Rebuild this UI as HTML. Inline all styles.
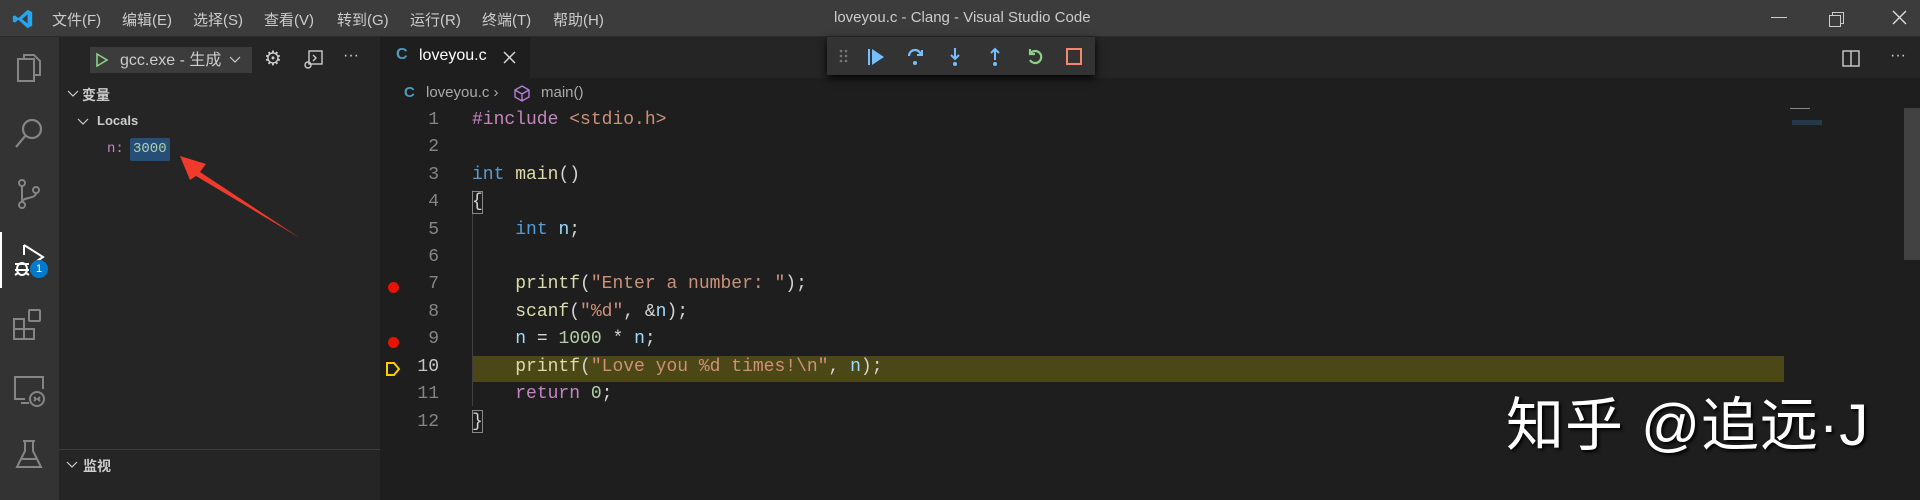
<!DOCTYPE html>
<html><head><meta charset="utf-8"><style>
*{margin:0;padding:0;box-sizing:border-box}
body{width:1920px;height:500px;background:#1e1e1e;overflow:hidden;position:relative;font-family:"Liberation Sans","Noto Sans CJK SC",sans-serif;color:#ccc}
.abs{position:absolute}
#title{left:0;top:0;width:1920px;height:37px;background:#3c3c3c;border-bottom:1px solid #2b2b2b}
#title span.m{position:absolute;top:9px;font-size:15px;color:#ccc}
#act{left:0;top:37px;width:59px;height:463px;background:#333}
#side{left:59px;top:37px;width:321px;height:463px;background:#252526}
#tabs{left:380px;top:37px;width:1540px;height:41px;background:#252526}
.mono{font-family:"Liberation Mono",monospace;font-size:18px}
.ln{position:absolute;left:400px;width:39px;text-align:right;color:#858585;font-family:"Liberation Mono",monospace;font-size:18px}
.cd{position:absolute;left:472px;white-space:pre;font-family:"Liberation Mono",monospace;font-size:18px;color:#d4d4d4}
.f{color:#dcdcaa}.s{color:#ce9178}.v{color:#9cdcfe}.k{color:#569cd6}.c{color:#c586c0}.nu{color:#b5cea8}
</style></head><body>
<div id="title" class="abs">
<svg class="abs" style="left:12px;top:8px" width="22" height="22" viewBox="0 0 24 24"><path d="M17 2 L22 4.5 V19.5 L17 22 L7 13 L3 16 L1 15 V9 L3 8 L7 11 Z M17 7 L11 12 L17 17Z" fill="#23a7f2" fill-rule="evenodd"/></svg>
<span class="m" style="left:52px">文件(F)</span><span class="m" style="left:122px">编辑(E)</span><span class="m" style="left:193px">选择(S)</span><span class="m" style="left:264px">查看(V)</span><span class="m" style="left:337px">转到(G)</span><span class="m" style="left:410px">运行(R)</span><span class="m" style="left:482px">终端(T)</span><span class="m" style="left:553px">帮助(H)</span>
<span class="m" style="left:834px">loveyou.c - Clang - Visual Studio Code</span>
<div class="abs" style="left:1771px;top:17px;width:16px;height:1px;background:#ccc"></div>
<div class="abs" style="left:1832px;top:12px;width:12px;height:12px;border:1px solid #ccc"></div>
<div class="abs" style="left:1829px;top:15px;width:12px;height:12px;border:1px solid #ccc;background:#3c3c3c"></div>
<svg class="abs" style="left:1892px;top:10px" width="15" height="15"><path d="M1 1L14 14M14 1L1 14" stroke="#ddd" stroke-width="1.4"/></svg>
</div>
<div id="act" class="abs">
<svg class="abs" style="left:13px;top:14px" width="32" height="32" viewBox="0 0 32 32" fill="none" stroke="#858585" stroke-width="2"><path d="M11 8V4h10l6 6v14h-6"/><rect x="5" y="8" width="16" height="22"/></svg>
<svg class="abs" style="left:13px;top:80px" width="32" height="32" viewBox="0 0 32 32" fill="none" stroke="#858585" stroke-width="2.2"><circle cx="19" cy="12" r="9"/><path d="M13 18L3 30"/></svg>
<svg class="abs" style="left:14px;top:141px" width="30" height="32" viewBox="0 0 30 32" fill="none" stroke="#858585" stroke-width="2"><circle cx="8" cy="5" r="3"/><circle cx="8" cy="27" r="3"/><circle cx="22" cy="12" r="3"/><path d="M8 8v16M22 15c0 6-14 4-14 9"/></svg>
<div class="abs" style="left:0;top:195px;width:2px;height:56px;background:#fff"></div>
<svg class="abs" style="left:12px;top:205px" width="36" height="36" viewBox="0 0 36 36" fill="none" stroke="#fff" stroke-width="2"><path d="M12 3v10M12 3l19 12-6 4"/><ellipse cx="10" cy="27" rx="5" ry="6"/><path d="M3 22h14M3 28h14M3 33l3-2M17 33l-3-2"/></svg>
<div class="abs" style="left:30px;top:223px;width:18px;height:18px;border-radius:9px;background:#007acc;color:#fff;font-size:11px;text-align:center;line-height:18px">1</div>
<svg class="abs" style="left:13px;top:272px" width="32" height="32" viewBox="0 0 32 32" fill="none" stroke="#858585" stroke-width="2"><rect x="1" y="10" width="10" height="10"/><rect x="1" y="20" width="10" height="10"/><rect x="11" y="20" width="10" height="10"/><rect x="16" y="1" width="11" height="11" rx="1"/></svg>
<svg class="abs" style="left:13px;top:338px" width="32" height="32" viewBox="0 0 32 32" fill="none" stroke="#858585" stroke-width="2"><path d="M12 24H2V2h28v12M8 28h8"/><circle cx="24" cy="24" r="7"/><path d="M21 22l2 2-2 2M27 22l-2 2 2 2"/></svg>
<svg class="abs" style="left:15px;top:402px" width="28" height="32" viewBox="0 0 28 32" fill="none" stroke="#858585" stroke-width="2"><path d="M8 2h12M10 2v10L2 28h24L18 12V2M6 20h16"/></svg>
</div>
<div id="side" class="abs">
<div class="abs" style="left:31px;top:10px;width:162px;height:26px;background:#3c3c3c"></div>
<svg class="abs" style="left:36px;top:15px" width="14" height="16"><path d="M2 2L12 8L2 14Z" fill="none" stroke="#89d185" stroke-width="1.6"/></svg>
<span class="abs" style="left:61px;top:9px;font-size:16px;color:#ccc">gcc.exe - 生成</span>
<svg class="abs" style="left:170px;top:18px" width="12" height="10"><path d="M1 2l5 5 5-5" fill="none" stroke="#ccc" stroke-width="1.2"/></svg>
<span class="abs" style="left:205px;top:9px;font-size:20px;color:#ccc">⚙</span>
<svg class="abs" style="left:243px;top:12px" width="22" height="22" viewBox="0 0 22 22" fill="none" stroke="#ccc" stroke-width="1.4"><rect x="7" y="2" width="13" height="13"/><path d="M11 6l3 3-3 3"/><circle cx="6" cy="16" r="3"/></svg>
<span class="abs" style="left:284px;top:10px;font-size:16px;color:#ccc">···</span>
<svg class="abs" style="left:8px;top:52px" width="12" height="10"><path d="M1 2l5 5 5-5" fill="none" stroke="#ccc" stroke-width="1.2"/></svg>
<span class="abs" style="left:23px;top:48px;font-size:14px;color:#ccc;font-weight:bold">变量</span>
<svg class="abs" style="left:18px;top:80px" width="12" height="10"><path d="M1 2l5 5 5-5" fill="none" stroke="#ccc" stroke-width="1.2"/></svg>
<span class="abs" style="left:38px;top:76px;font-size:13px;color:#ccc;font-weight:bold">Locals</span>
<span class="abs mono" style="left:48px;top:104px;font-size:14px;color:#c586c0">n:</span>
<div class="abs" style="left:71px;top:101px;width:40px;height:23px;background:#264f78;border-radius:2px"></div>
<span class="abs mono" style="left:74px;top:104px;font-size:14px;color:#b5cea8">3000</span>
<div class="abs" style="left:0;top:412px;width:321px;height:1px;background:#3c3c3c"></div>
<svg class="abs" style="left:7px;top:423px" width="12" height="10"><path d="M1 2l5 5 5-5" fill="none" stroke="#ccc" stroke-width="1.2"/></svg>
<span class="abs" style="left:24px;top:419px;font-size:14px;color:#ccc;font-weight:bold">监视</span>
</div>
<svg class="abs" style="left:170px;top:150px" width="140" height="95"><path d="M130 88L30 22L36 14L10 6L20 30L26 26Z" fill="#f03a2c"/></svg>
<div id="tabs" class="abs">
<div class="abs" style="left:0;top:0;width:150px;height:41px;background:#1e1e1e"></div>
<span class="abs" style="left:16px;top:9px;font-size:16px;color:#519aba;font-weight:bold">C</span>
<span class="abs" style="left:39px;top:10px;font-size:16px;color:#fff">loveyou.c</span>
<svg class="abs" style="left:123px;top:14px" width="13" height="13"><path d="M1 1l11 11M12 1L1 12" stroke="#ddd" stroke-width="1.4"/></svg>
<svg class="abs" style="left:1462px;top:13px" width="18" height="17"><rect x="1" y="1" width="16" height="15" fill="none" stroke="#ccc" stroke-width="1.4"/><path d="M9 1v15" stroke="#ccc" stroke-width="1.4"/></svg>
<span class="abs" style="left:1510px;top:10px;font-size:16px;color:#ccc">···</span>
</div>
<span class="abs" style="left:404px;top:84px;font-size:15px;color:#519aba;font-weight:bold">C</span>
<span class="abs" style="left:426px;top:84px;font-size:15px;color:#aaa">loveyou.c ›</span>
<svg class="abs" style="left:514px;top:85px" width="16" height="17" viewBox="0 0 16 17" fill="none" stroke="#b180d7" stroke-width="1.4"><path d="M8 1l7 4v7l-7 4-7-4V5zM1 5l7 4 7-4M8 9v7"/></svg>
<span class="abs" style="left:541px;top:84px;font-size:15px;color:#aaa">main()</span>
<div class="abs" style="left:827px;top:37px;width:268px;height:38px;background:#333;box-shadow:0 3px 8px #000"></div>
<svg class="abs" style="left:838px;top:48px" width="12" height="16" fill="#777"><circle cx="3" cy="3" r="1.3"/><circle cx="8" cy="3" r="1.3"/><circle cx="3" cy="8" r="1.3"/><circle cx="8" cy="8" r="1.3"/><circle cx="3" cy="13" r="1.3"/><circle cx="8" cy="13" r="1.3"/></svg>
<svg class="abs" style="left:866px;top:47px" width="20" height="20"><rect x="2" y="2" width="2" height="16" fill="#75beff"/><path d="M6 2l12 8-12 8z" fill="#75beff"/></svg>
<svg class="abs" style="left:905px;top:46px" width="20" height="22" fill="none" stroke="#75beff" stroke-width="2.2"><path d="M4 10a6 6 0 0 1 12 0"/><path d="M12 9h5V4" stroke-width="2"/><circle cx="10" cy="17" r="2" fill="#75beff" stroke="none"/></svg>
<svg class="abs" style="left:945px;top:46px" width="20" height="22" fill="none" stroke="#75beff" stroke-width="2"><path d="M10 2v11M6 9l4 4 4-4"/><circle cx="10" cy="18" r="2" fill="#75beff" stroke="none"/></svg>
<svg class="abs" style="left:985px;top:46px" width="20" height="22" fill="none" stroke="#75beff" stroke-width="2"><path d="M10 14V3M6 7l4-4 4 4"/><circle cx="10" cy="18" r="2" fill="#75beff" stroke="none"/></svg>
<svg class="abs" style="left:1025px;top:46px" width="20" height="22" fill="none" stroke="#89d185" stroke-width="2.2"><path d="M5 8a6 6 0 1 1 0 6M5 3v5h5"/></svg>
<div class="abs" style="left:1066px;top:48px;width:16px;height:17px;border:2px solid #f48771"></div>
<div class="abs" style="left:472px;top:356px;width:1312px;height:26px;background:#4b4716"></div>
<div class="abs" style="left:472px;top:190px;width:1px;height:216px;background:#404040"></div>
<div class="abs" style="left:472px;top:191px;width:11px;height:23px;border:1px solid #888"></div>
<div class="abs" style="left:472px;top:410px;width:11px;height:23px;border:1px solid #888"></div>
<div class="abs" style="left:388px;top:282px;width:11px;height:11px;border-radius:6px;background:#e51400"></div>
<div class="abs" style="left:388px;top:337px;width:11px;height:11px;border-radius:6px;background:#e51400"></div>
<svg class="abs" style="left:385px;top:361px" width="16" height="16"><path d="M2 2h7l5 6-5 6H2z" fill="none" stroke="#ffcc00" stroke-width="2"/></svg>
<div class="ln" style="top:110px">1</div><div class="cd" style="top:110px"><span class="c">#include</span> <span class="s">&lt;stdio.h&gt;</span></div>
<div class="ln" style="top:137px">2</div>
<div class="ln" style="top:165px">3</div><div class="cd" style="top:165px"><span class="k">int</span> <span class="f">main</span>()</div>
<div class="ln" style="top:192px">4</div><div class="cd" style="top:192px">{</div>
<div class="ln" style="top:220px">5</div><div class="cd" style="top:220px">    <span class="k">int</span> <span class="v">n</span>;</div>
<div class="ln" style="top:247px">6</div>
<div class="ln" style="top:274px">7</div><div class="cd" style="top:274px">    <span class="f">printf</span>(<span class="s">"Enter a number: "</span>);</div>
<div class="ln" style="top:302px">8</div><div class="cd" style="top:302px">    <span class="f">scanf</span>(<span class="s">"%d"</span>, &amp;<span class="v">n</span>);</div>
<div class="ln" style="top:329px">9</div><div class="cd" style="top:329px">    <span class="v">n</span> = <span class="nu">1000</span> * <span class="v">n</span>;</div>
<div class="ln" style="top:357px;color:#c6c6c6">10</div><div class="cd" style="top:357px">    <span class="f">printf</span>(<span class="s">"Love you %d times!\n"</span>, <span class="v">n</span>);</div>
<div class="ln" style="top:384px">11</div><div class="cd" style="top:384px">    <span class="c">return</span> <span class="nu">0</span>;</div>
<div class="ln" style="top:412px">12</div><div class="cd" style="top:412px">}</div>
<div class="abs" style="left:1790px;top:108px;width:20px;height:1px;background:#888"></div>
<div class="abs" style="left:1792px;top:120px;width:30px;height:5px;background:#26394a"></div>
<div class="abs" style="left:1904px;top:108px;width:16px;height:152px;background:#424242"></div>
<div class="abs" style="left:1506px;top:378px;font-size:58px;letter-spacing:1px;color:#fff;text-shadow:2px 2px 3px #000;font-family:'Liberation Sans','Noto Sans CJK SC',sans-serif;white-space:nowrap">知乎 @追远·J</div>
</body></html>
